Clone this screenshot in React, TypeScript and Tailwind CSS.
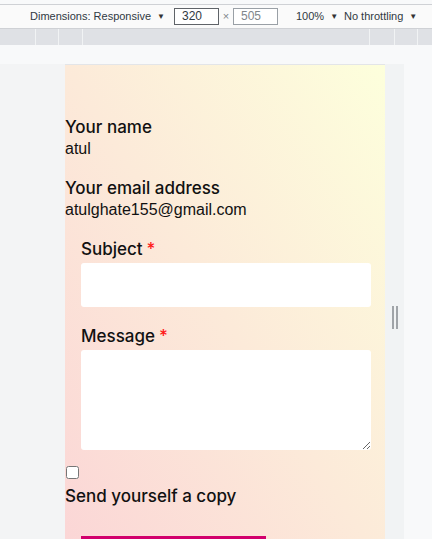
import React from "react";

const ui = { fontFamily: '"Liberation Sans", Arial, sans-serif' };
const heading = { fontFamily: "Inter, sans-serif" };

function Caret() {
  return <span className="ml-[6px] inline-block text-[8px] leading-none text-[#333]">▼</span>;
}

function Toolbar() {
  return (
    <div className="mt-[4px] flex h-[25px] items-center whitespace-nowrap border-y border-[#cfd1d5] bg-[#fafafa] text-[11px] text-[#303942]" style={ui}>
      <div className="ml-[30px] flex w-[144px] shrink-0 items-center">
        Dimensions: Responsive
        <Caret />
      </div>
      <div className="h-[17px] w-[45px] shrink-0 border border-[#5f6368] bg-white pl-[7px] text-[12px] leading-[15px]">320</div>
      <span className="w-[14px] shrink-0 text-center text-[#80868b]">×</span>
      <div className="h-[17px] w-[45px] shrink-0 border border-[#9aa0a6] bg-white pl-[7px] text-[12px] leading-[15px] text-[#80868b]">505</div>
      <div className="ml-[18px] flex w-[48px] shrink-0 items-center">
        100%
        <Caret />
      </div>
      <div className="flex shrink-0 items-center">
        No throttling
        <Caret />
      </div>
    </div>
  );
}

function Ruler() {
  const ticks = [35, 58, 82, 369, 394, 417];
  return (
    <div className="relative h-[16px] bg-[#dfe1e5]">
      {ticks.map((x) => (
        <span key={x} className="absolute top-0 h-full w-px bg-[#f1f3f4]" style={{ left: x }} />
      ))}
    </div>
  );
}

function Label({ children, required }: { children: React.ReactNode; required?: boolean }) {
  return (
    <div className="text-[17px] font-medium leading-[24px] text-[#111]" style={heading}>
      {children}
      {required && <span className="ml-[4px] text-[#ff1a1a]">*</span>}
    </div>
  );
}

function Value({ children }: { children: React.ReactNode }) {
  return (
    <div className="text-[16px] leading-[20px] text-[#111]" style={ui}>
      {children}
    </div>
  );
}

function ContactForm() {
  return (
    <div className="h-[505px] w-[320px] bg-[linear-gradient(to_top_right,#fbd5d6,#fdffdc)] pt-[50px]">
      <Label>Your name</Label>
      <Value>atul</Value>

      <div className="mt-[17px]">
        <Label>Your email address</Label>
        <Value>atulghate155@gmail.com</Value>
      </div>

      <div className="mt-[17px] pl-[16px]">
        <Label required>Subject</Label>
        <input className="mt-[2px] block h-[44px] w-[290px] rounded-[3px] bg-white outline-none" />

        <div className="mt-[17px]">
          <Label required>Message</Label>
          <textarea className="mt-[2px] block h-[100px] w-[290px] rounded-[3px] bg-white outline-none" />
        </div>
      </div>

      <input type="checkbox" className="mt-[16px] ml-[1px] block h-[13px] w-[13px]" />
      <div className="mt-[5px]">
        <Label>Send yourself a copy</Label>
      </div>

      <button className="mt-[28px] ml-[16px] block h-[40px] w-[185px] border-t-[3px] border-[#d2006c]" />
    </div>
  );
}

export default function App() {
  return (
    <div className="h-[539px] w-[432px] overflow-hidden bg-[#f8f9fa]">
      <Toolbar />
      <Ruler />
      <div className="mt-[19px] flex">
        <div className="w-[65px] bg-[#f3f4f5]" />
        <div className="border-t border-[#e3e5e8]">
          <ContactForm />
        </div>
        <div className="relative w-[19px] bg-[#f1f3f4]">
          <span className="absolute left-[7px] top-[242px] h-[23px] w-[2px] bg-[#a0a4a8]" />
          <span className="absolute left-[11px] top-[242px] h-[23px] w-[2px] bg-[#a0a4a8]" />
        </div>
      </div>
    </div>
  );
}
